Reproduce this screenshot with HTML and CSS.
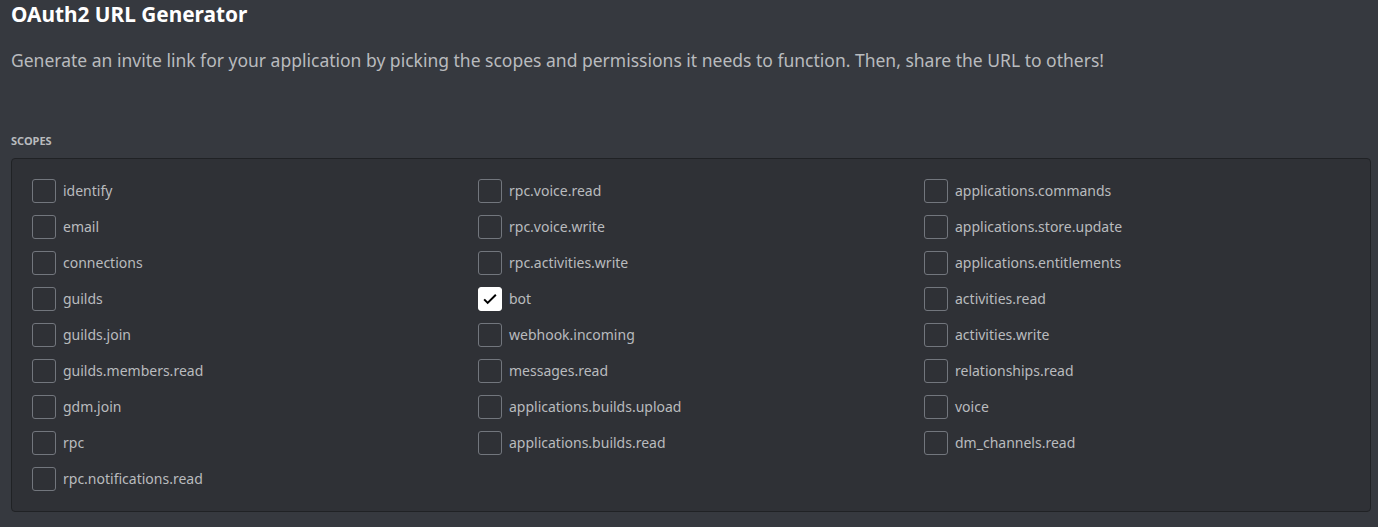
FILE: index.html
```html
<!DOCTYPE html>
<html>
<head>
<meta charset="utf-8">
<link rel="stylesheet" href="styles.css">
</head>
<body>
<div class="page">
  <h1 class="title">OAuth2 URL Generator</h1>
  <p class="desc">Generate an invite link for your application by picking the scopes and permissions it needs to function. Then, share the URL to others!</p>
  <h5 class="label">Scopes</h5>
  <div class="box">
    <div class="col">
      <label class="item"><span class="cb"></span><span class="text">identify</span></label>
      <label class="item"><span class="cb"></span><span class="text">email</span></label>
      <label class="item"><span class="cb"></span><span class="text">connections</span></label>
      <label class="item"><span class="cb"></span><span class="text">guilds</span></label>
      <label class="item"><span class="cb"></span><span class="text">guilds.join</span></label>
      <label class="item"><span class="cb"></span><span class="text">guilds.members.read</span></label>
      <label class="item"><span class="cb"></span><span class="text">gdm.join</span></label>
      <label class="item"><span class="cb"></span><span class="text">rpc</span></label>
      <label class="item"><span class="cb"></span><span class="text">rpc.notifications.read</span></label>
    </div>
    <div class="col">
      <label class="item"><span class="cb"></span><span class="text">rpc.voice.read</span></label>
      <label class="item"><span class="cb"></span><span class="text">rpc.voice.write</span></label>
      <label class="item"><span class="cb"></span><span class="text">rpc.activities.write</span></label>
      <label class="item"><span class="cb checked"><svg viewBox="0 0 24 24" width="20" height="20"><path d="M5 12.5l4.2 4.2L19 7" fill="none" stroke="#000" stroke-width="2.4"/></svg></span><span class="text">bot</span></label>
      <label class="item"><span class="cb"></span><span class="text">webhook.incoming</span></label>
      <label class="item"><span class="cb"></span><span class="text">messages.read</span></label>
      <label class="item"><span class="cb"></span><span class="text">applications.builds.upload</span></label>
      <label class="item"><span class="cb"></span><span class="text">applications.builds.read</span></label>
    </div>
    <div class="col">
      <label class="item"><span class="cb"></span><span class="text">applications.commands</span></label>
      <label class="item"><span class="cb"></span><span class="text">applications.store.update</span></label>
      <label class="item"><span class="cb"></span><span class="text">applications.entitlements</span></label>
      <label class="item"><span class="cb"></span><span class="text">activities.read</span></label>
      <label class="item"><span class="cb"></span><span class="text">activities.write</span></label>
      <label class="item"><span class="cb"></span><span class="text">relationships.read</span></label>
      <label class="item"><span class="cb"></span><span class="text">voice</span></label>
      <label class="item"><span class="cb"></span><span class="text">dm_channels.read</span></label>
    </div>
  </div>
</div>
</body>
</html>
```

FILE: styles.css
```css
html, body {
  margin: 0;
  padding: 0;
  background: #36393f;
}
body {
  font-family: "Noto Sans", "Open Sans", sans-serif;
  color: #b9bbbe;
}
.page {
  padding: 0 7px 0 11px;
}
.title {
  margin: 0;
  padding-top: 1px;
  font-size: 20.8px;
  line-height: 26px;
  font-weight: 700;
  color: #ffffff;
}
.desc {
  margin: 21px 0 0 0;
  font-size: 17.5px;
  line-height: 24px;
  color: #b9bbbe;
}
.label {
  margin: 61px 0 0 0;
  font-size: 11px;
  line-height: 16px;
  font-weight: 700;
  text-transform: uppercase;
  color: #b9bbbe;
}
.box {
  margin-top: 9px;
  display: grid;
  grid-template-columns: repeat(3, 1fr);
  padding: 20px 0 20px 20px;
  background: #2f3136;
  border: 1px solid #202225;
  border-radius: 4px;
}
.col {
  display: flex;
  flex-direction: column;
  gap: 12px;
}
.item {
  display: flex;
  align-items: center;
  height: 24px;
}
.cb {
  box-sizing: border-box;
  width: 24px;
  height: 24px;
  border: 1px solid #72767d;
  border-radius: 3px;
  margin-right: 7px;
  display: flex;
  align-items: center;
  justify-content: center;
  flex: none;
}
.cb.checked {
  background: #ffffff;
  border-color: #ffffff;
}
.text {
  font-size: 14px;
  line-height: 18px;
  color: #b9bbbe;
}
```
